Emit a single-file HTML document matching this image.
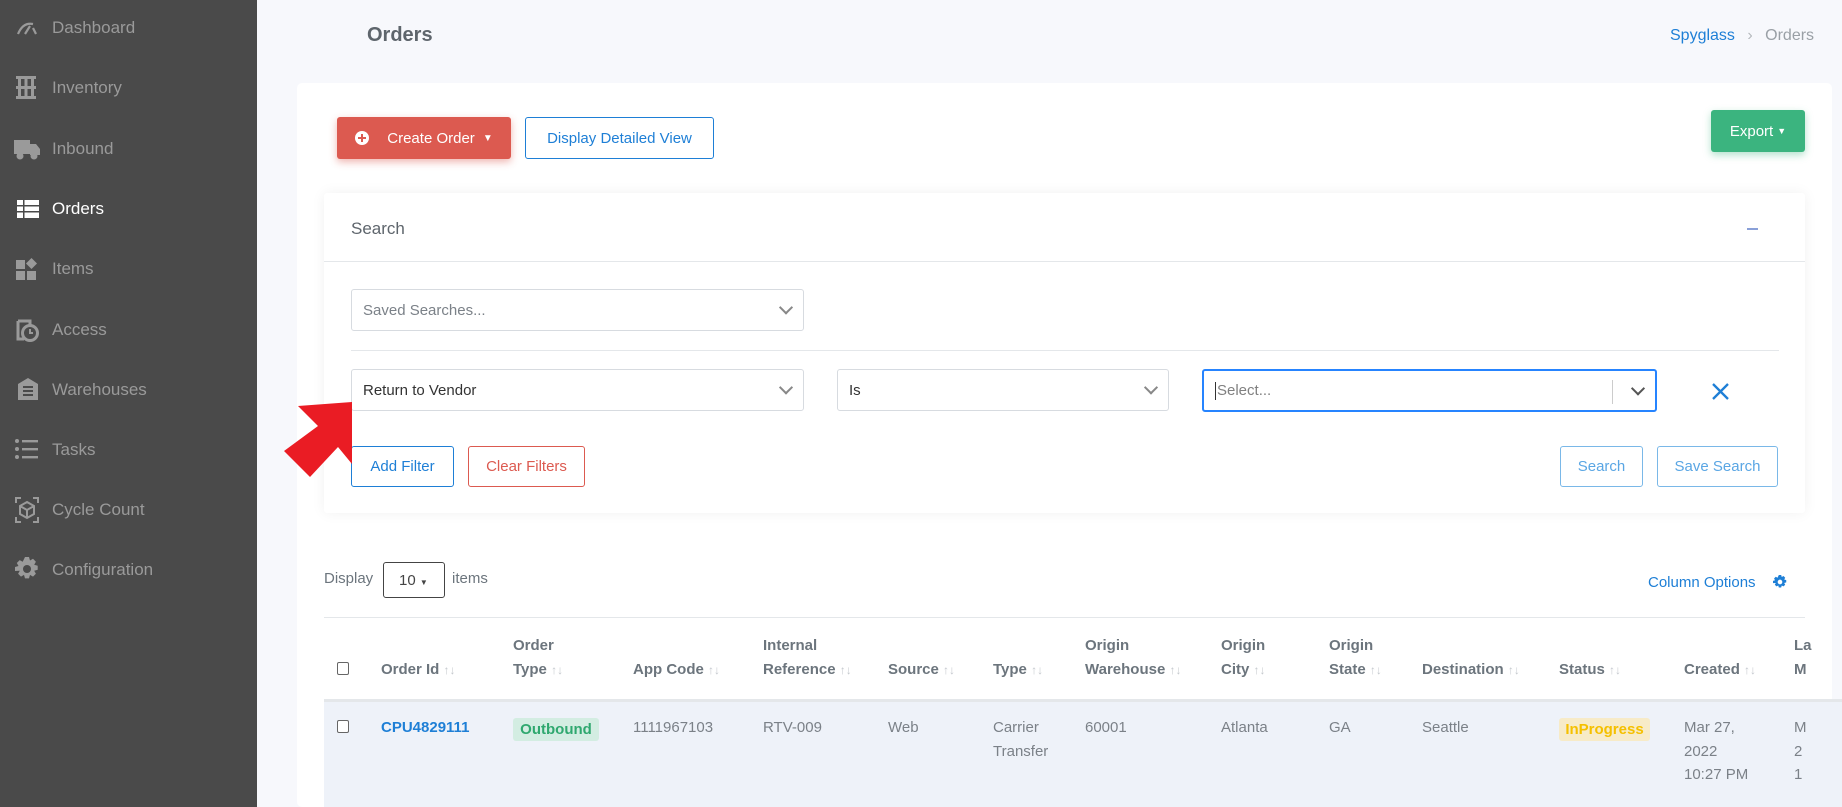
<!DOCTYPE html>
<html><head><meta charset="utf-8"><style>
*{box-sizing:border-box;margin:0;padding:0}
body{width:1842px;height:807px;overflow:hidden;background:#f7f8fc;font-family:"Liberation Sans",sans-serif;position:relative;color:#6c757d}
.a{position:absolute}
.side{left:0;top:0;width:257px;height:807px;background:#4a4a4a}
.nav{position:absolute;left:52px;font-size:17px;color:#9a9a9a;line-height:20px}
.btn{position:absolute;border-radius:3px;font-size:15px;display:flex;align-items:center;justify-content:center}
.sel{position:absolute;border:1px solid #d7dbe0;border-radius:3px;background:#fff;font-size:15px;display:flex;align-items:center;padding-left:11px}
.chev{position:absolute;right:12px;top:50%;width:10px;height:10px;border-right:2px solid #888;border-bottom:2px solid #888;transform:translateY(-75%) rotate(45deg)}
.th{position:absolute;font-size:15px;font-weight:bold;color:#6c757d;line-height:24px}
.td{position:absolute;font-size:15px;color:#7b8188;line-height:23.5px;top:716px}
.ar{color:#c5c9ce;font-weight:normal;font-size:12px}
</style></head><body>
<div class="a side"></div>
<svg class="a" style="left:15px;top:20px" width="24" height="16"><path d="M3 14 Q8 2 18 4 M10 14 L15 6 M18 8 L21 14" stroke="#9a9a9a" stroke-width="2.2" fill="none"/></svg>
<div class="nav" style="top:18px">Dashboard</div>
<svg class="a" style="left:16px;top:76px" width="20" height="24"><g fill="#9a9a9a"><rect x="0" y="0" width="20" height="3"/><rect x="0" y="10" width="20" height="3"/><rect x="0" y="20" width="20" height="3"/><rect x="2" y="0" width="3" height="23"/><rect x="8.5" y="0" width="3" height="23"/><rect x="15" y="0" width="3" height="23"/></g></svg>
<div class="nav" style="top:78px">Inventory</div>
<svg class="a" style="left:14px;top:138px" width="26" height="22"><g fill="#9a9a9a"><rect x="0" y="2" width="16" height="14"/><path d="M16 6 H22 L26 11 V17 H16Z"/><circle cx="6" cy="18" r="3.5"/><circle cx="20" cy="18" r="3.5"/></g></svg>
<div class="nav" style="top:139px">Inbound</div>
<svg class="a" style="left:17px;top:200px" width="22" height="18"><g fill="#fff"><rect x="0" y="0" width="22" height="18"/></g><g fill="#4a4a4a"><rect x="0" y="5" width="22" height="1.5"/><rect x="0" y="11" width="22" height="1.5"/><rect x="6" y="0" width="1.5" height="18"/></g></svg>
<div class="nav" style="top:199px;color:#fff">Orders</div>
<svg class="a" style="left:16px;top:258px" width="22" height="24"><g fill="#9a9a9a"><rect x="0" y="2" width="9" height="9"/><rect x="0" y="13" width="9" height="9"/><rect x="11" y="13" width="9" height="9"/><path d="M15.5 0 L21 5.5 L15.5 11 L10 5.5Z"/></g></svg>
<div class="nav" style="top:259px">Items</div>
<svg class="a" style="left:15px;top:317px" width="24" height="26"><path d="M3 4 H15 V9 M3 4 V22 H9" stroke="#9a9a9a" stroke-width="3" fill="none"/><circle cx="15" cy="16" r="7.5" fill="none" stroke="#9a9a9a" stroke-width="3"/><path d="M15 12 V16 H18" stroke="#9a9a9a" stroke-width="2" fill="none"/></svg>
<div class="nav" style="top:320px">Access</div>
<svg class="a" style="left:18px;top:378px" width="20" height="22"><path d="M0 6 L10 0 L20 6 V22 H0Z" fill="#9a9a9a"/><g fill="#4a4a4a"><rect x="5" y="8" width="10" height="2"/><rect x="5" y="12" width="10" height="2"/><rect x="5" y="16" width="10" height="2"/></g></svg>
<div class="nav" style="top:380px">Warehouses</div>
<svg class="a" style="left:15px;top:439px" width="24" height="20"><g fill="#9a9a9a"><circle cx="2" cy="2" r="2"/><circle cx="2" cy="10" r="2"/><circle cx="2" cy="18" r="2"/><rect x="7" y="1" width="16" height="2.4"/><rect x="7" y="9" width="16" height="2.4"/><rect x="7" y="17" width="16" height="2.4"/></g></svg>
<div class="nav" style="top:440px">Tasks</div>
<svg class="a" style="left:15px;top:497px" width="24" height="26"><path d="M1 6 V1 H6 M18 1 H23 V6 M23 20 V25 H18 M6 25 H1 V20" stroke="#9a9a9a" stroke-width="2" fill="none"/><path d="M12 5 L19 9 V17 L12 21 L5 17 V9Z M5 9 L12 13 L19 9 M12 13 V21" stroke="#9a9a9a" stroke-width="2" fill="none"/></svg>
<div class="nav" style="top:500px">Cycle Count</div>
<svg class="a" style="left:15px;top:557px" width="24" height="24" viewBox="0 0 24 24"><path d="M10 0h4l1 3.5 3-1.7 2.9 2.9-1.7 3 3.5 1v4l-3.5 1 1.7 3-2.9 2.9-3-1.7-1 3.5h-4l-1-3.5-3 1.7-2.9-2.9 1.7-3L0 14v-4l3.5-1-1.7-3 2.9-2.9 3 1.7z" fill="#9a9a9a"/><circle cx="12" cy="12" r="4" fill="#4a4a4a"/></svg>
<div class="nav" style="top:560px">Configuration</div>

<div class="a" style="left:367px;top:24px;font-size:20px;font-weight:bold;color:#5e656c">Orders</div>
<div class="a" style="left:1670px;top:27px;font-size:16px"><span style="color:#1e7fd6">Spyglass</span> <span style="color:#b5b9bd;margin:0 8px">›</span> <span style="color:#9aa0a6">Orders</span></div>

<div class="a" style="left:297px;top:83px;width:1535px;height:724px;background:#fff;border-radius:5px"></div>
<div class="btn" style="left:337px;top:117px;width:174px;height:42px;background:#dc5a50;color:#fff;box-shadow:0 3px 8px rgba(220,90,80,.45)"><span style="display:inline-block;width:14px;height:14px;border-radius:50%;background:#fff;margin-right:18px;position:relative"><span style="position:absolute;left:3px;top:6px;width:8px;height:2px;background:#dc5a50"></span><span style="position:absolute;left:6px;top:3px;width:2px;height:8px;background:#dc5a50"></span></span>Create Order <span style="font-size:10px;margin-left:8px">▼</span></div>
<div class="btn" style="left:525px;top:117px;width:189px;height:42px;border:1.5px solid #1e7fd6;color:#1e7fd6">Display Detailed View</div>
<div class="btn" style="left:1711px;top:110px;width:94px;height:42px;background:#3bb47f;color:#fff;box-shadow:0 3px 8px rgba(59,180,127,.4)">Export <span style="font-size:9px;margin-left:4px">▼</span></div>

<div class="a" style="left:324px;top:193px;width:1481px;height:320px;background:#fff;box-shadow:0 0 14px rgba(0,0,0,.06);border-radius:3px"></div>
<div class="a" style="left:324px;top:261px;width:1481px;height:1px;background:#e4e7ea"></div>
<div class="a" style="left:351px;top:219px;font-size:17px;color:#5e656c">Search</div>
<div class="a" style="left:1747px;top:228px;width:11px;height:2px;background:#8aa0d8"></div>
<div class="sel" style="left:351px;top:289px;width:453px;height:42px;color:#7b8188">Saved Searches...<span class="chev"></span></div>
<div class="a" style="left:351px;top:350px;width:1428px;height:1px;background:#e4e7ea"></div>
<div class="sel" style="left:351px;top:369px;width:453px;height:42px;color:#333">Return to Vendor<span class="chev"></span></div>
<div class="sel" style="left:837px;top:369px;width:332px;height:42px;color:#333">Is<span class="chev"></span></div>
<div class="sel" style="left:1202px;top:369px;width:455px;height:43px;border:2px solid #2684ff;color:#808080"><span style="width:1px;height:18px;background:#333;margin-right:1px"></span>Select...<span style="position:absolute;right:42px;top:9px;width:1px;height:24px;background:#ccc"></span><span class="chev" style="border-color:#555"></span></div>
<svg class="a" style="left:1712px;top:383px" width="17" height="17"><path d="M1 1L16 16M16 1L1 16" stroke="#1e7fd6" stroke-width="2.3"/></svg>
<div class="btn" style="left:351px;top:446px;width:103px;height:41px;border:1.5px solid #1e7fd6;color:#1e7fd6">Add Filter</div>
<div class="btn" style="left:468px;top:446px;width:117px;height:41px;border:1.5px solid #dc5a50;color:#dc5a50">Clear Filters</div>
<div class="btn" style="left:1560px;top:446px;width:83px;height:41px;border:1.5px solid #7ab8e8;color:#5aa6e4">Search</div>
<div class="btn" style="left:1657px;top:446px;width:121px;height:41px;border:1.5px solid #7ab8e8;color:#5aa6e4">Save Search</div>
<svg class="a" style="left:270px;top:395px" width="90" height="90"><polygon points="82,7 28,11 48,31 14,56 40,82 68,52 82,69" fill="#ea1c24"/></svg>

<div class="a" style="left:324px;top:570px;font-size:15px">Display</div>
<div class="a" style="left:383px;top:562px;width:62px;height:36px;border:1.5px solid #444;border-radius:3px;font-size:15px;color:#444;padding:9px 0 0 15px">10 <span style="font-size:8px">▼</span></div>
<div class="a" style="left:452px;top:570px;font-size:15px">items</div>
<div class="a" style="left:1648px;top:574px;font-size:15px;color:#1e7fd6">Column Options</div>
<svg class="a" style="left:1773px;top:575px" width="14" height="14" viewBox="0 0 24 24"><path d="M10 0h4l1 3.5 3-1.7 2.9 2.9-1.7 3 3.5 1v4l-3.5 1 1.7 3-2.9 2.9-3-1.7-1 3.5h-4l-1-3.5-3 1.7-2.9-2.9 1.7-3L0 14v-4l3.5-1-1.7-3 2.9-2.9 3 1.7z" fill="#1e7fd6"/><circle cx="12" cy="12" r="4" fill="#fff"/></svg>
<div class="a" style="left:324px;top:617px;width:1481px;height:1px;background:#e4e7ea"></div>

<div class="a" style="left:337px;top:662px;width:12px;height:13px;border:1px solid #666;border-radius:2px"></div>
<div class="th" style="left:381px;top:658px">Order Id <span class="ar">↑↓</span></div>
<div class="th" style="left:513px;top:634px">Order<br>Type <span class="ar">↑↓</span></div>
<div class="th" style="left:633px;top:658px">App Code <span class="ar">↑↓</span></div>
<div class="th" style="left:763px;top:634px">Internal<br>Reference <span class="ar">↑↓</span></div>
<div class="th" style="left:888px;top:658px">Source <span class="ar">↑↓</span></div>
<div class="th" style="left:993px;top:658px">Type <span class="ar">↑↓</span></div>
<div class="th" style="left:1085px;top:634px">Origin<br>Warehouse <span class="ar">↑↓</span></div>
<div class="th" style="left:1221px;top:634px">Origin<br>City <span class="ar">↑↓</span></div>
<div class="th" style="left:1329px;top:634px">Origin<br>State <span class="ar">↑↓</span></div>
<div class="th" style="left:1422px;top:658px">Destination <span class="ar">↑↓</span></div>
<div class="th" style="left:1559px;top:658px">Status <span class="ar">↑↓</span></div>
<div class="th" style="left:1684px;top:658px">Created <span class="ar">↑↓</span></div>
<div class="th" style="left:1794px;top:634px">La<br>M</div>

<div class="a" style="left:324px;top:699px;width:1518px;height:3px;background:#e4e7ea"></div>
<div class="a" style="left:324px;top:702px;width:1518px;height:105px;background:#eef2f9"></div>
<div class="a" style="left:337px;top:720px;width:12px;height:13px;border:1px solid #666;border-radius:2px;background:#fff"></div>
<div class="td" style="left:381px;color:#1e7fd6;font-weight:bold">CPU4829111</div>
<div class="a" style="left:513px;top:718px;width:86px;height:23px;background:#d3ede2;border-radius:3px;color:#2fa86f;font-weight:bold;font-size:15px;text-align:center;line-height:23px">Outbound</div>
<div class="td" style="left:633px">1111967103</div>
<div class="td" style="left:763px">RTV-009</div>
<div class="td" style="left:888px">Web</div>
<div class="td" style="left:993px">Carrier<br>Transfer</div>
<div class="td" style="left:1085px">60001</div>
<div class="td" style="left:1221px">Atlanta</div>
<div class="td" style="left:1329px">GA</div>
<div class="td" style="left:1422px">Seattle</div>
<div class="a" style="left:1559px;top:718px;width:91px;height:23px;background:#f7ebc8;border-radius:3px;color:#f5c000;font-weight:bold;font-size:15px;text-align:center;line-height:23px">InProgress</div>
<div class="td" style="left:1684px">Mar 27,<br>2022<br>10:27 PM</div>
<div class="td" style="left:1794px">M<br>2<br>1</div>
</body></html>
